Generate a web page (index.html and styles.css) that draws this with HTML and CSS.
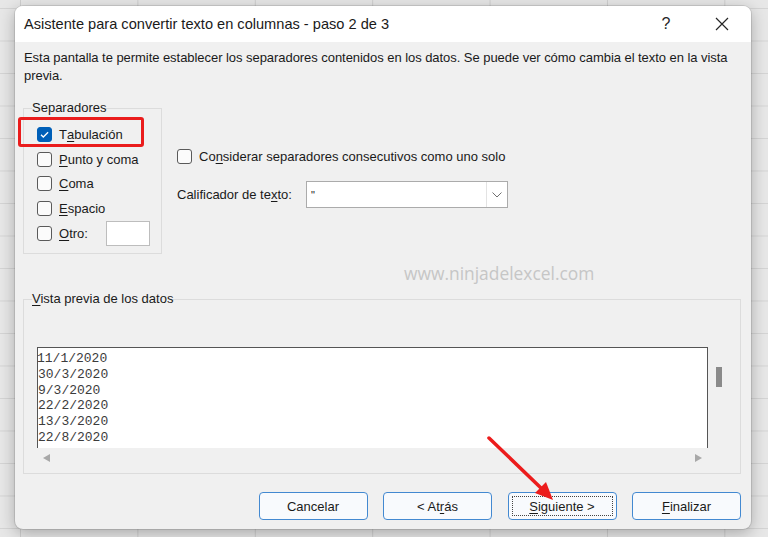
FILE: index.html
```html
<!DOCTYPE html>
<html>
<head>
    <title>Asistente para convertir texto en columnas</title>
    <link rel="stylesheet" href="styles.css">
</head>
<body>
    <div class="dialog">
        <div class="titlebar">
            <span class="title">Asistente para convertir texto en columnas - paso 2 de 3</span>
            <span class="help">?</span>
            <span class="close">
                <svg width="14" height="14" viewBox="0 0 14 14"><path d="M1 1L13 13M13 1L1 13" stroke="#262626" stroke-width="1.2" fill="none"/></svg>
            </span>
        </div>
        <div class="content">
            <p class="intro">Esta pantalla te permite establecer los separadores contenidos en los datos. Se puede ver cómo cambia el texto en la vista<br>previa.</p>

            <div class="options">
                <fieldset class="group separators">
                    <legend>Separadores</legend>
                    <label class="check marked">
                        <span class="box checked"><svg width="15" height="15" viewBox="0 0 15 15"><path d="M4 7.8l2.3 2.2 4.8-4.8" stroke="#fff" stroke-width="1.3" fill="none"/></svg></span>
                        T<u>a</u>bulación
                        <span class="highlight"></span>
                    </label>
                    <label class="check"><span class="box"></span><u>P</u>unto y coma</label>
                    <label class="check"><span class="box"></span><u>C</u>oma</label>
                    <label class="check"><span class="box"></span><u>E</u>spacio</label>
                    <label class="check other"><span class="box"></span><u>O</u>tro:<span class="field"></span></label>
                </fieldset>

                <div class="side">
                    <label class="check"><span class="box"></span>Co<u>n</u>siderar separadores consecutivos como uno solo</label>
                    <div class="qualifier">
                        <span class="qualifier-label">Calificador de te<u>x</u>to:</span>
                        <div class="combo">
                            <span class="combo-value">"</span>
                            <span class="combo-arrow"><svg width="10" height="6" viewBox="0 0 10 6"><path d="M0.5 0.5L5 5L9.5 0.5" stroke="#707070" stroke-width="1" fill="none"/></svg></span>
                        </div>
                    </div>
                </div>
            </div>

            <div class="watermark">www.ninjadelexcel.com</div>

            <fieldset class="group preview">
                <legend><u>V</u>ista previa de los datos</legend>
                <div class="preview-frame">
                    <pre class="preview-text">11/1/2020
30/3/2020
9/3/2020
22/2/2020
13/3/2020
22/8/2020</pre>
                    <div class="vscroll"><span class="thumb"></span></div>
                    <div class="hscroll"><span class="arrow-left"></span><span class="arrow-right"></span></div>
                </div>
            </fieldset>

            <div class="buttons">
                <button class="btn">Cancelar</button>
                <button class="btn">&lt; At<u>r</u>ás</button>
                <button class="btn focused"><u>S</u>iguiente &gt;</button>
                <button class="btn"><u>F</u>inalizar</button>
            </div>
        </div>
    </div>

    <!-- red arrow pointing at "Siguiente" -->
    <svg class="annotation" width="768" height="537" viewBox="0 0 768 537">
        <line x1="489" y1="438" x2="541" y2="488" stroke="#ec1c1c" stroke-width="3.5" stroke-linecap="round"/>
        <polygon points="553,500 535,493 546,482" fill="#ec1c1c"/>
    </svg>
</body>
</html>
```

FILE: styles.css
```css
html, body {
    height: 100%;
}
body {
    margin: 0;
    padding: 6px 0 0 15px;
    box-sizing: border-box;
    position: relative;
    overflow: hidden;
    font-family: "Liberation Sans", Arial, sans-serif;
    color: #1a1a1a;
    background-color: #e7e7e7;
    background-image: linear-gradient(to right, #cfcfcf 1px, transparent 1px),
                      linear-gradient(to bottom, #d4d4d4 1px, transparent 1px);
    background-size: 117.4px 32.5px;
    background-position: 20px 8px;
}

.dialog {
    width: 736px;
    height: 523px;
    background: #f0f0f0;
    border-radius: 8px;
    overflow: hidden;
    box-shadow: 0 0 0 1px rgba(0,0,0,0.1), 0 4px 16px rgba(0,0,0,0.28);
    display: flex;
    flex-direction: column;
}

/* title bar */
.titlebar {
    height: 36px;
    background: #fff;
    display: flex;
    align-items: center;
    padding: 0 6px 0 9px;
}
.title {
    flex: 1;
    font-size: 14.6px;
    color: #1a1a1a;
}
.help, .close {
    width: 46px;
    display: flex;
    justify-content: center;
    align-items: center;
    font-size: 16px;
    color: #262626;
}
.help {
    margin-right: 10px;
}

.content {
    flex: 1;
    padding: 7px 10px 0 8px;
    font-size: 13px;
}
.intro {
    margin: 0 0 0 1px;
    line-height: 18px;
    letter-spacing: -0.05px;
}

u {
    text-underline-offset: 2px;
}

/* group boxes */
.group {
    margin: 0;
    border: 1px solid #dcdcdc;
    min-width: 0;
}
.group legend {
    padding: 0;
    line-height: 16px;
}

.options {
    display: flex;
    margin-top: 15px;
}
.separators {
    width: 139px;
    box-sizing: border-box;
    padding: 6.5px 0 7.5px 8px;
}

.check {
    display: flex;
    align-items: center;
    height: 24.5px;
    position: relative;
}
.separators .check {
    padding-left: 5px;
}
.box {
    width: 13px;
    height: 13px;
    border: 1px solid #5a5a5a;
    border-radius: 3px;
    background: #fbfbfb;
    margin-right: 7px;
    display: flex;
    flex-shrink: 0;
}
.box.checked {
    background: #005fb8;
    border-color: #005fb8;
}
.box.checked svg {
    margin: -1px;
}
.highlight {
    position: absolute;
    left: -14px;
    top: -5.5px;
    width: 120px;
    height: 24px;
    border: 3px solid #ea1c1c;
    border-radius: 3px;
}
.check.other {
    height: 25px;
}
.field {
    width: 42px;
    height: 23px;
    background: #fff;
    border: 1px solid #bdbdbd;
    margin-left: 18px;
}

.side {
    margin-left: 15px;
    padding-top: 44.5px;
}
.qualifier {
    display: flex;
    align-items: center;
    margin-top: 12px;
}
.qualifier-label {
    width: 129px;
}
.combo {
    width: 202px;
    height: 27px;
    box-sizing: border-box;
    border: 1px solid #ababab;
    background: #fff;
    display: flex;
    align-items: center;
}
.combo-value {
    flex: 1;
    padding-left: 4px;
    font-size: 11px;
}
.combo-arrow {
    width: 20px;
    height: 100%;
    border-left: 1px solid #e3e3e3;
    display: flex;
    justify-content: center;
    align-items: center;
}

.watermark {
    margin-top: 10px;
    padding-left: 381px;
    height: 18px;
    line-height: 18px;
    font-family: "Open Sans", sans-serif;
    font-size: 17.4px;
    color: #c6c6c6;
}

/* preview */
.preview {
    margin-top: 9px;
    padding: 40px 10px 5px 8px;
}
.preview-frame {
    margin-left: 5px;
    display: grid;
    grid-template-columns: 1fr 22px;
    grid-template-rows: 101px 20px;
}
.preview-text {
    margin: 0;
    padding-top: 3px;
    background: #fff;
    border: 1px solid #555;
    border-bottom: none;
    font-family: "Liberation Mono", "Courier New", monospace;
    font-size: 13px;
    line-height: 15.8px;
    color: #3c3c3c;
    text-indent: -1px;
}
.vscroll {
    display: flex;
    justify-content: center;
    padding-top: 20px;
}
.thumb {
    width: 6px;
    height: 20px;
    background: #8a8a8a;
}
.hscroll {
    display: flex;
    justify-content: space-between;
    align-items: center;
    padding: 0 6px 0 6px;
}
.arrow-left {
    border-top: 4.5px solid transparent;
    border-bottom: 4.5px solid transparent;
    border-right: 7px solid #a8a8a8;
}
.arrow-right {
    border-top: 4.5px solid transparent;
    border-bottom: 4.5px solid transparent;
    border-left: 7px solid #a8a8a8;
}

/* buttons */
.buttons {
    display: flex;
    justify-content: flex-end;
    gap: 15.5px;
    margin-top: 18px;
}
.btn {
    width: 109px;
    height: 28px;
    position: relative;
    background: #f8fafd;
    border: 1px solid #4389d1;
    border-radius: 4px;
    font-family: "Liberation Sans", Arial, sans-serif;
    font-size: 13px;
    color: #1a1a1a;
    padding: 0;
}
.btn.focused::after {
    content: "";
    position: absolute;
    inset: 3px;
    border: 1px dotted #444;
}

.annotation {
    position: absolute;
    left: 0;
    top: 0;
    pointer-events: none;
}
```
